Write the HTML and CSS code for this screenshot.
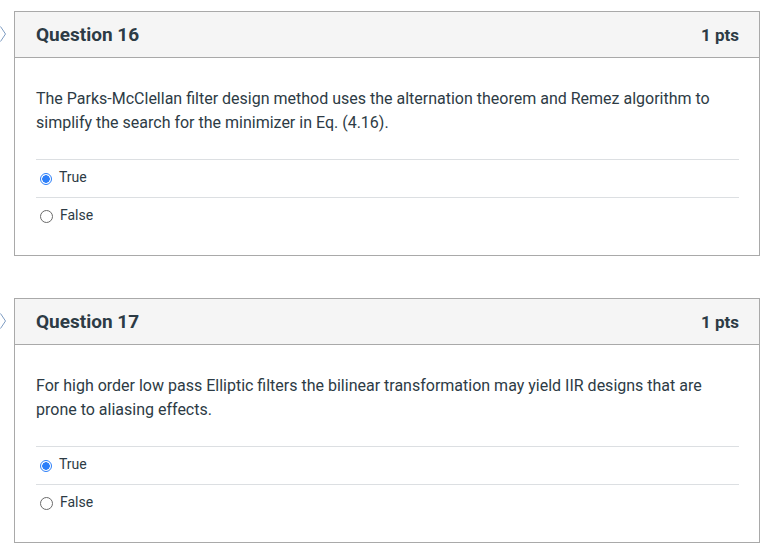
FILE: index.html
```html
<!DOCTYPE html>
<html>
<head>
<meta charset="utf-8">
<link rel="stylesheet" href="styles.css">
</head>
<body>
<div class="page">
  <div class="question">
    <svg class="flag" width="8" height="16" viewBox="0 0 8 16"><polyline points="0.5,0.5 5.5,8 0.5,15.5" fill="none" stroke="#7f9dc2" stroke-width="1"/></svg>
    <div class="card">
      <div class="card-header">
        <span class="title">Question 16</span>
        <span class="pts">1 pts</span>
      </div>
      <div class="card-body">
        <p class="text">The Parks-McClellan filter design method uses the alternation theorem and Remez algorithm to simplify the search for the minimizer in Eq. (4.16).</p>
        <div class="answers">
          <label class="answer"><span class="radio checked"></span><span>True</span></label>
          <label class="answer"><span class="radio"></span><span>False</span></label>
        </div>
      </div>
    </div>
  </div>
  <div class="question">
    <svg class="flag" width="8" height="16" viewBox="0 0 8 16"><polyline points="0.5,0.5 5.5,8 0.5,15.5" fill="none" stroke="#7f9dc2" stroke-width="1"/></svg>
    <div class="card">
      <div class="card-header">
        <span class="title">Question 17</span>
        <span class="pts">1 pts</span>
      </div>
      <div class="card-body">
        <p class="text">For high order low pass Elliptic filters the bilinear transformation may yield IIR designs that are prone to aliasing effects.</p>
        <div class="answers">
          <label class="answer"><span class="radio checked"></span><span>True</span></label>
          <label class="answer"><span class="radio"></span><span>False</span></label>
        </div>
      </div>
    </div>
  </div>
</div>
</body>
</html>
```
FILE: styles.css
```css
html, body {
  margin: 0;
  padding: 0;
  background: #ffffff;
}
body {
  font-family: Roboto, "Liberation Sans", sans-serif;
  color: #2d3b45;
}
.page {
  padding: 11px 0 0 14px;
  width: 746px;
  display: flex;
  flex-direction: column;
  gap: 42px;
}
.question {
  position: relative;
}
.flag {
  position: absolute;
  left: -14px;
  top: 15px;
}
.card {
  border: 1px solid #a9a9a9;
}
.card-header {
  height: 45px;
  background: #f5f5f5;
  border-bottom: 1px solid #a9a9a9;
  display: flex;
  align-items: center;
  justify-content: space-between;
  padding: 0 20px 0 21px;
}
.title {
  font-size: 19px;
  font-weight: 700;
  color: #2d3b45;
}
.pts {
  font-size: 17px;
  font-weight: 700;
  color: #2d3b45;
}
.card-body {
  padding: 29px 20px 20px 21px;
}
.text {
  margin: 0;
  font-size: 16px;
  line-height: 24px;
  color: #2d3b45;
}
.answers {
  margin-top: 24px;
  border-top: 1px solid #dcdfe2;
}
.answer {
  height: 38px;
  box-sizing: border-box;
  padding-bottom: 3px;
  display: flex;
  align-items: center;
  gap: 7px;
  padding-left: 4px;
  font-size: 14px;
  color: #2d3b45;
  border-bottom: 1px solid #dcdfe2;
}
.answer:last-child {
  height: 37px;
  border-bottom: none;
}
.radio {
  width: 11px;
  height: 11px;
  border: 1px solid #6b6b6b;
  border-radius: 50%;
  box-sizing: content-box;
  display: inline-block;
  margin-top: 3px;
}
.radio.checked {
  border-color: #2d7ff9;
  background: radial-gradient(circle, #2d7ff9 0 3.5px, #ffffff 4px);
  border-width: 1.5px;
  width: 10px;
  height: 10px;
}
```
